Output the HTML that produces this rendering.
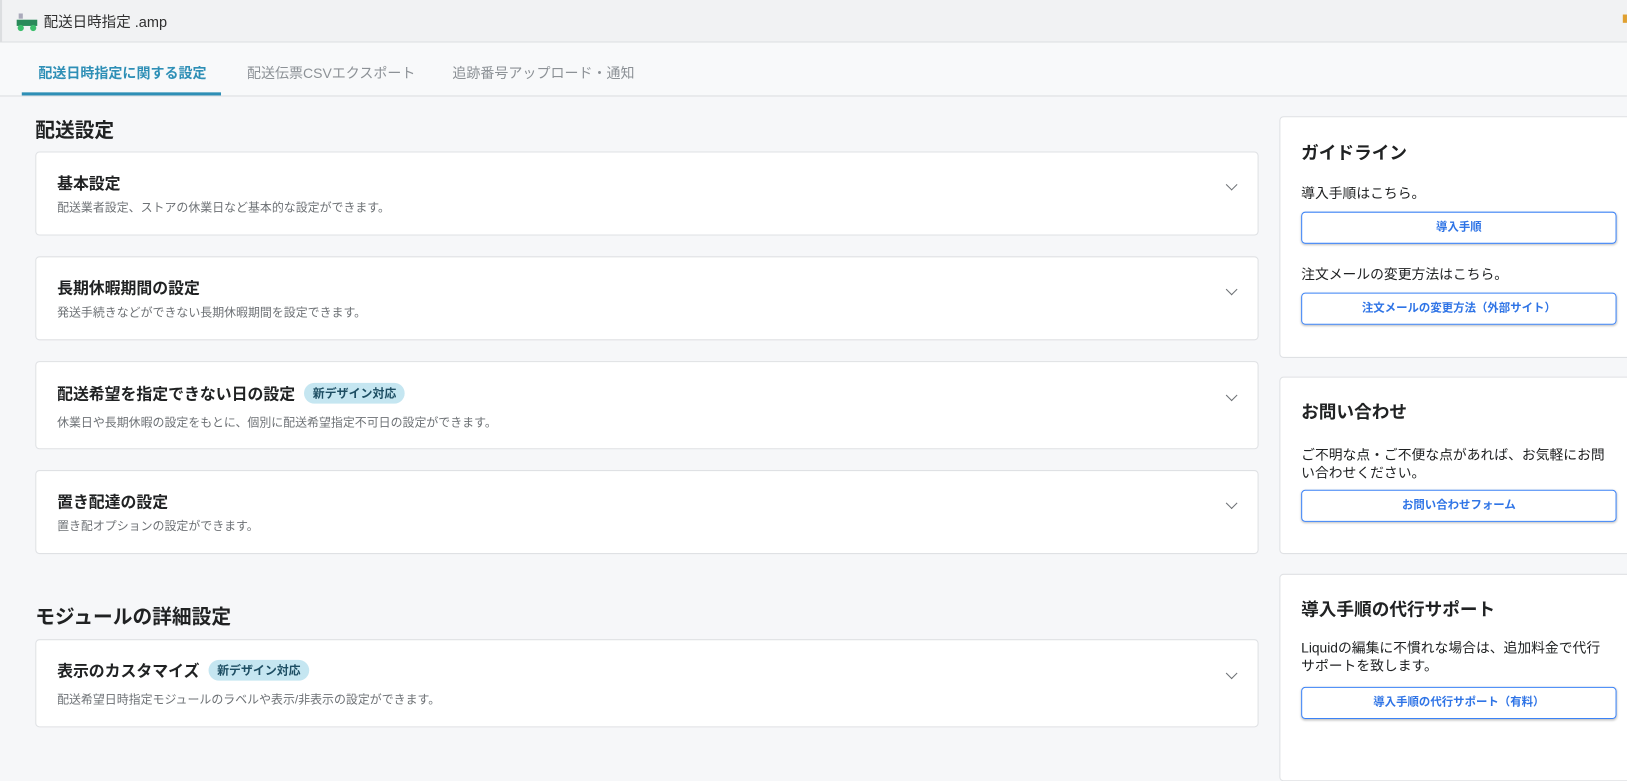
<!DOCTYPE html><html><head><meta charset="utf-8"><style>
*{box-sizing:border-box;margin:0;padding:0}
html,body{width:1627px;height:741px;overflow:hidden;background:#f6f7f9}
body{font-family:"Liberation Sans","Noto Sans CJK JP",sans-serif;color:#202223}
#w{position:absolute;left:0;top:0;width:1568px;height:715px;transform:scale(1.0376);transform-origin:0 0}
.top{position:absolute;left:0;top:0;width:1568px;height:41px;background:#f1f2f3;border-bottom:1px solid #dcdee0;border-left:2px solid #dcdee0}
.top span{position:absolute;left:40px;top:11px;font-size:14px;color:#303030}
.tabs{position:absolute;left:0;top:41px;width:1568px;height:52px;border-bottom:1px solid #dcdee0;background:#f8f9fa}
.tab{position:absolute;top:18px;font-size:13.5px;color:#8c9196}
.tab.a{color:#2e8fb6;font-weight:bold}
.ul{position:absolute;left:21px;top:48px;width:192px;height:3px;background:#2e8fb6}
.h{position:absolute;left:34px;font-size:19px;font-weight:bold}
.card{position:absolute;left:34px;width:1179px;background:#fff;border:1px solid #dfe1e4;border-radius:4px}
.card b{position:absolute;left:20px;font-size:15.3px}
.card p{position:absolute;left:20px;font-size:11.5px;color:#6d7175}
.chev{position:absolute;right:21px;width:8px;height:8px;border-right:1.5px solid #6d7175;border-bottom:1.5px solid #6d7175;transform:rotate(45deg)}
.badge{display:inline-block;margin-left:9px;background:#c5e6f1;color:#1d4e63;font-size:11.5px;padding:2px 8px;border-radius:10px;vertical-align:2px}
.side{position:absolute;left:1233px;width:410px;background:#fff;border:1px solid #dfe1e4;border-radius:4px}
.side h3{position:absolute;left:20px;font-size:17px}
.side p{position:absolute;left:20px;font-size:13.3px;width:300px;line-height:17px}
.btn{position:absolute;left:20px;width:304px;height:31px;border:1.5px solid #3b82f6;border-radius:4px;color:#2f74e6;font-size:11px;font-weight:bold;text-align:center;line-height:28px;box-shadow:0 1px 2px rgba(0,0,0,.25)}
</style></head><body><div id="w">
<div class="top">
<svg style="position:absolute;left:14px;top:11px" width="20" height="20"><rect x="2" y="2" width="4" height="5" fill="#aab"/><rect x="0" y="8" width="20" height="6" fill="#2a8a5a"/><circle cx="4" cy="16" r="3" fill="#3cbf6c"/><circle cx="16" cy="16" r="3" fill="#3cbf6c"/></svg>
<span>配送日時指定 .amp</span>
<div style="position:absolute;right:0;top:14px;width:4px;height:8px;background:#e0a030"></div>
</div>
<div class="tabs">
<div class="tab a" style="left:37px">配送日時指定に関する設定</div>
<div class="tab" style="left:238px">配送伝票CSVエクスポート</div>
<div class="tab" style="left:436px">追跡番号アップロード・通知</div>
<div class="ul"></div>
</div>
<div class="h" style="top:111px">配送設定</div>
<div class="card" style="top:146px;height:81px"><b style="top:18px">基本設定</b><p style="top:45px">配送業者設定、ストアの休業日など基本的な設定ができます。</p><i class="chev" style="top:27px"></i></div>
<div class="card" style="top:247px;height:81px"><b style="top:18px">長期休暇期間の設定</b><p style="top:45px">発送手続きなどができない長期休暇期間を設定できます。</p><i class="chev" style="top:27px"></i></div>
<div class="card" style="top:348px;height:85px"><b style="top:19px">配送希望を指定できない日の設定<span class="badge">新デザイン対応</span></b><p style="top:50px">休業日や長期休暇の設定をもとに、個別に配送希望指定不可日の設定ができます。</p><i class="chev" style="top:28px"></i></div>
<div class="card" style="top:453px;height:81px"><b style="top:18px">置き配達の設定</b><p style="top:45px">置き配オプションの設定ができます。</p><i class="chev" style="top:27px"></i></div>
<div class="h" style="top:580px">モジュールの詳細設定</div>
<div class="card" style="top:616px;height:85px"><b style="top:18px">表示のカスタマイズ<span class="badge">新デザイン対応</span></b><p style="top:49px">配送希望日時指定モジュールのラベルや表示/非表示の設定ができます。</p><i class="chev" style="top:28px"></i></div>
<div class="side" style="top:112px;height:233px"><h3 style="top:20px">ガイドライン</h3><p style="top:65px">導入手順はこちら。</p><div class="btn" style="top:91px">導入手順</div><p style="top:143px">注文メールの変更方法はこちら。</p><div class="btn" style="top:169px">注文メールの変更方法（外部サイト）</div></div>
<div class="side" style="top:363px;height:171px"><h3 style="top:19px">お問い合わせ</h3><p style="top:66px">ご不明な点・ご不便な点があれば、お気軽にお問い合わせください。</p><div class="btn" style="top:108px">お問い合わせフォーム</div></div>
<div class="side" style="top:553px;height:200px"><h3 style="top:19px">導入手順の代行サポート</h3><p style="top:62px">Liquidの編集に不慣れな場合は、追加料金で代行サポートを致します。</p><div class="btn" style="top:108px">導入手順の代行サポート（有料）</div></div>
</div></body></html>
